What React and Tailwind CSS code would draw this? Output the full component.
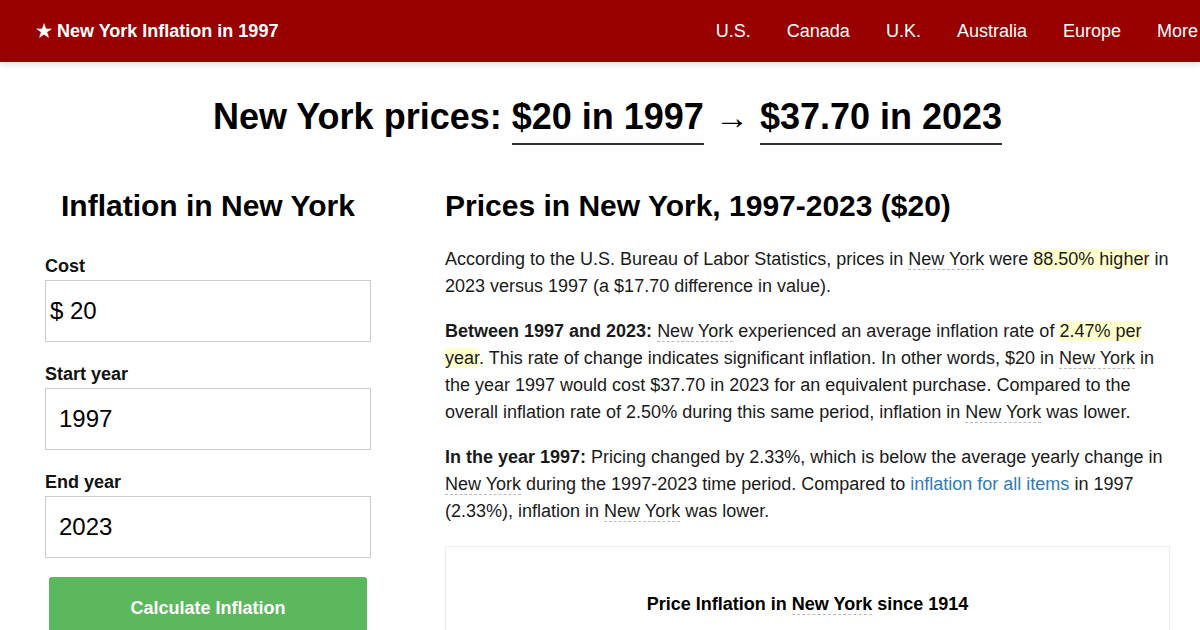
import React from 'react';

const Place = ({ children }) => (
    <span className="border-b border-dashed border-[#bbb]">{children}</span>
);

const Mark = ({ children }) => <span className="bg-[#ffffcc]">{children}</span>;

const Field = ({ label, children }) => (
    <div className="mb-[21px]">
        <label className="block text-[18px] font-bold leading-[22px] mb-[3px]">{label}</label>
        <div className="h-[62px] border border-[#ccc] flex items-center text-[24px] text-black">
            {children}
        </div>
    </div>
);

export default function App() {
    const nav = ['U.S.', 'Canada', 'U.K.', 'Australia', 'Europe', 'More'];
    return (
        <div className="w-[1200px] h-[630px] overflow-hidden bg-white text-[#111] font-['Liberation_Sans',Arial,sans-serif]">
            <header className="h-[62px] bg-[#990000] flex items-center justify-between pl-[36px] shadow-[0_2px_6px_rgba(0,0,0,0.15)] relative">
                <div className="text-white font-bold text-[18px]">★ New York Inflation in 1997</div>
                <nav className="flex text-white text-[18px] gap-[36px] whitespace-nowrap mr-[2px]">
                    {nav.map(n => <span key={n}>{n}</span>)}
                </nav>
            </header>

            <h1 className="text-center text-[36px] font-bold leading-[41px] mt-[34px] pl-[15px] text-black">
                New York prices:{' '}
                <span className="inline-block border-b-2 border-[#333] pb-[6px]">$20 in 1997</span>
                <span className="font-normal text-[34px] mx-[11px]">→</span>
                <span className="inline-block border-b-2 border-[#333] pb-[6px]">$37.70 in 2023</span>
            </h1>

            <div className="flex pl-[45px] mt-[44px]">
                <div className="w-[326px] shrink-0">
                    <h2 className="text-center text-[30px] font-bold leading-[34px] text-black mb-[32px]">Inflation in New York</h2>
                    <Field label="Cost">
                        <span className="pl-[4px]">$ 20</span>
                    </Field>
                    <Field label="Start year">
                        <span className="pl-[13px]">1997</span>
                    </Field>
                    <Field label="End year">
                        <span className="pl-[13px]">2023</span>
                    </Field>
                    <button className="mx-[4px] -mt-[2px] w-[318px] h-[62px] bg-[#5cb85c] text-white font-bold text-[18px] rounded-[3px]">
                        Calculate Inflation
                    </button>
                </div>

                <div className="ml-[74px] w-[725px]">
                    <h2 className="text-[30px] font-bold leading-[34px] text-black mb-[23px]">Prices in New York, 1997-2023 ($20)</h2>
                    <div className="text-[18px] leading-[27px] text-[#1a1a1a]">
                        <p className="mb-[18px]">
                            According to the U.S. Bureau of Labor Statistics, prices in <Place>New York</Place> were <Mark>88.50% higher</Mark> in 2023 versus 1997 (a $17.70 difference in value).
                        </p>
                        <p className="mb-[18px]">
                            <b>Between 1997 and 2023:</b> <Place>New York</Place> experienced an average inflation rate of <Mark>2.47% per year</Mark>. This rate of change indicates significant inflation. In other words, $20 in <Place>New York</Place> in the year 1997 would cost $37.70 in 2023 for an equivalent purchase. Compared to the overall inflation rate of 2.50% during this same period, inflation in <Place>New York</Place> was lower.
                        </p>
                        <p className="mb-[21px]">
                            <b>In the year 1997:</b> Pricing changed by 2.33%, which is below the average yearly change in <Place>New York</Place> during the 1997-2023 time period. Compared to <span className="text-[#337ab7]">inflation for all items</span> in 1997 (2.33%), inflation in <Place>New York</Place> was lower.
                        </p>
                        <div className="border border-[#eee] h-[200px] pt-[44px] text-center">
                            <b className="text-black">Price Inflation in <Place>New York</Place> since 1914</b>
                        </div>
                    </div>
                </div>
            </div>
        </div>
    );
}
